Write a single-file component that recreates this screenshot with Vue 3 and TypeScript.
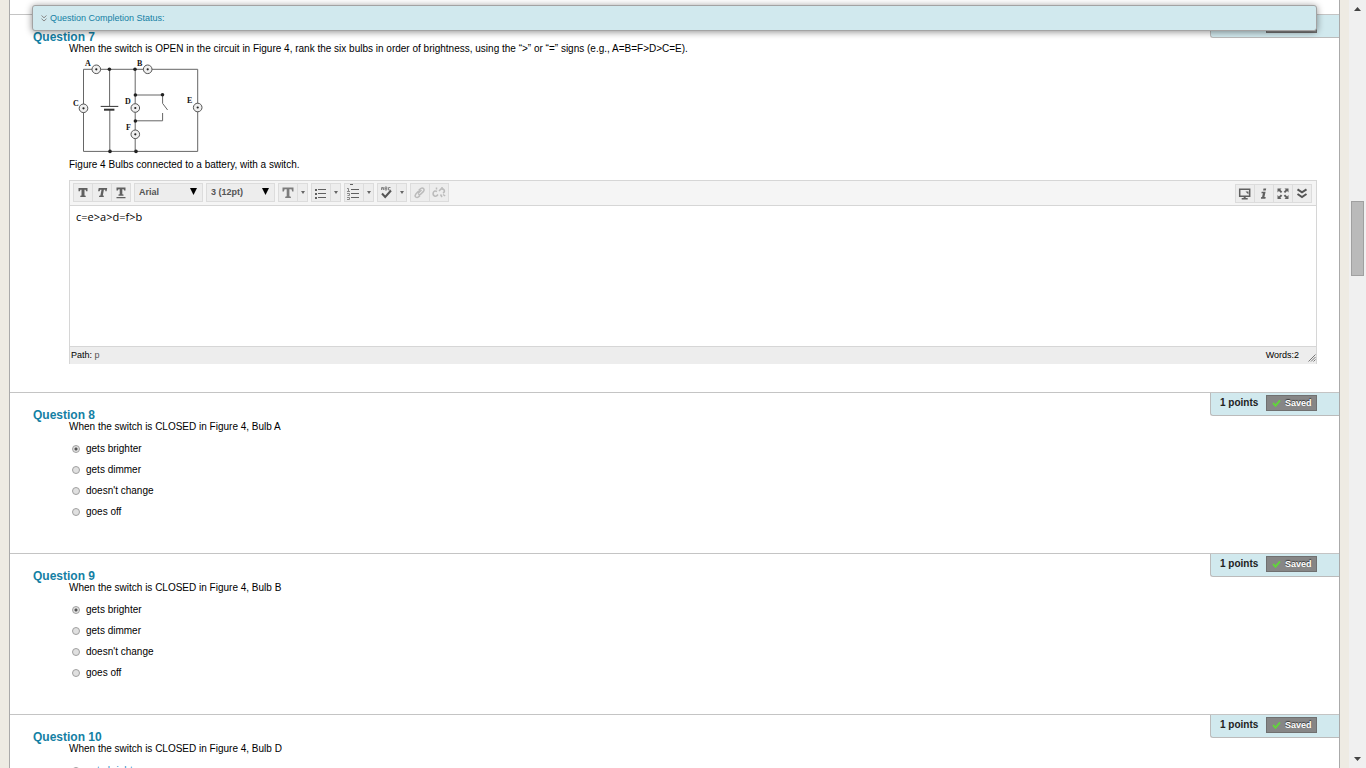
<script setup lang="ts">
import { ref } from 'vue'

interface Question {
  id: number
  text: string
  selected: string
}

const answer = ref('c=e>a>d=f>b')
const choices: string[] = ['gets brighter', 'gets dimmer', "doesn't change", 'goes off']
const questions = ref<Question[]>([
  { id: 8, text: 'When the switch is CLOSED in Figure 4, Bulb A', selected: 'gets brighter' },
  { id: 9, text: 'When the switch is CLOSED in Figure 4, Bulb B', selected: 'gets brighter' },
  { id: 10, text: 'When the switch is CLOSED in Figure 4, Bulb D', selected: '' },
])

const bulbs: { x: number; y: number }[] = [
  { x: 27.3, y: 12.3 },
  { x: 78.7, y: 12.3 },
  { x: 14.5, y: 51.3 },
  { x: 66.3, y: 51 },
  { x: 66.3, y: 77.3 },
  { x: 128.7, y: 50.5 },
]
const junctions: { x: number; y: number }[] = [
  { x: 40.4, y: 12.2 },
  { x: 66, y: 12.2 },
  { x: 66.4, y: 38 },
  { x: 93.5, y: 37.8 },
  { x: 66.4, y: 64 },
  { x: 41, y: 94.4 },
  { x: 67, y: 94.4 },
]
const labels: { t: string; x: number; y: number }[] = [
  { t: 'A', x: 16, y: 9 },
  { t: 'B', x: 68, y: 9 },
  { t: 'C', x: 4, y: 49 },
  { t: 'D', x: 56, y: 47 },
  { t: 'E', x: 118, y: 46 },
  { t: 'F', x: 57, y: 73 },
]
</script>

<template>
  <div class="window">
    <main class="page">
      <div class="status">
        <svg class="status-icon" viewBox="0 0 6 7" aria-hidden="true">
          <path d="M0.5 0.5 L3 2.8 L5.5 0.5 M0.5 3.7 L3 6 L5.5 3.7" />
        </svg>
        <a href="#">Question Completion Status:</a>
      </div>

      <section class="question essay">
        <header>
          <h3>Question 7</h3>
          <div class="points">
            <span>1 points</span>
            <button type="button" class="saved">Saved</button>
          </div>
        </header>
        <div class="body">
          <p>When the switch is OPEN in the circuit in Figure 4, rank the six bulbs in order of brightness, using the “&gt;” or “=” signs (e.g., A=B=F&gt;D&gt;C=E).</p>
          <svg class="circuit" viewBox="0 0 136 100" role="img" aria-label="Circuit diagram">
            <path class="wire" d="M14.5 12.3 H128.7 V94.4 H14.5 Z M40.6 12.3 V49 M40.8 53 V94.4 M66.2 12.3 V94.4 M66.4 38 H93.6 V46.4 L98.6 53 M93.6 56 V63.8 H66.4" />
            <path class="plate" d="M31.7 49.4 H49.3" />
            <path class="plate thick" d="M35 52.7 H45.4" />
            <g v-for="(b, i) in bulbs" :key="i">
              <circle class="bulb" :cx="b.x" :cy="b.y" r="4.3" />
              <circle class="core" :cx="b.x" :cy="b.y" r="1.1" />
            </g>
            <circle v-for="(j, i) in junctions" :key="'j' + i" class="dot" :cx="j.x" :cy="j.y" r="1.8" />
            <text v-for="l in labels" :key="l.t" :x="l.x" :y="l.y">{{ l.t }}</text>
          </svg>
          <p>Figure 4 Bulbs connected to a battery, with a switch.</p>

          <div class="editor">
            <div class="toolbar">
              <div class="group">
                <button type="button" aria-label="Bold">
                  <svg viewBox="0 0 18 17"><path class="f" d="M4.500 4h9v3.200h-1.400l-.5-1.400h-1.100v5.700l1.200.3V13H6.300v-1.200l1.200-.3V5.800H6.400l-.5 1.400H4.500z" /></svg>
                </button>
                <button type="button" aria-label="Italic">
                  <svg viewBox="0 0 18 17"><path class="f" d="M5.700 4h8.500l-.6 3.200h-1.200l-.2-1.500h-1.300l-1.100 5.800 1.100.3-.2 1.200H6l.2-1.200 1.200-.3 1.100-5.800H7.300l-.8 1.500H5.100z" /></svg>
                </button>
                <button type="button" aria-label="Underline">
                  <svg viewBox="0 0 18 17"><path class="f" d="M4.500 3.500h9v3h-1.400l-.5-1.300h-1.300v5l1.200.3v1.200h-5v-1.200l1.200-.3v-5H6.400l-.5 1.300H4.500zM4.500 13h9v1.200h-9z" /></svg>
                </button>
              </div>
              <label class="pick">
                <select aria-label="Font family"><option>Arial</option></select>
                <svg viewBox="0 0 7 7" aria-hidden="true"><path d="M0 0h7L3.500 7z" /></svg>
              </label>
              <label class="pick">
                <select aria-label="Font size"><option>3 (12pt)</option></select>
                <svg viewBox="0 0 7 7" aria-hidden="true"><path d="M0 0h7L3.500 7z" /></svg>
              </label>
              <div class="group">
                <button type="button" aria-label="Text color">
                  <svg viewBox="0 0 18 17"><path class="f soft" d="M3.500 3.500h11v4h-1.300l-.7-2.200h-2.100v7l1.500.4v1.400H6.200v-1.400l1.500-.4v-7H5.600L4.900 7.500H3.500z" /></svg>
                </button>
                <button type="button" class="drop" aria-label="More colors"><i></i></button>
              </div>
              <div class="group">
                <button type="button" aria-label="Bulleted list">
                  <svg viewBox="0 0 18 17"><path class="f" d="M3 5h2v2H3zM3 9h2v2H3zM3 13h2v2H3zM6 5h8v1H6zM6 9h8v1H6zM6 13h8v1H6z" /></svg>
                </button>
                <button type="button" class="drop" aria-label="More bullets"><i></i></button>
              </div>
              <div class="group">
                <button type="button" aria-label="Numbered list">
                  <svg viewBox="0 0 18 17"><path class="f" d="M5 0h3v1H5zM6 5h8v1H6zM6 9h8v1H6zM6 13h8v1H6z" /><path class="s" d="M2 4.500h1.500v3M2 7.500h3M2 9.500h2.500v2H2.500M2 13.500h2.500v2H2" /></svg>
                </button>
                <button type="button" class="drop" aria-label="More numbering"><i></i></button>
              </div>
              <div class="group">
                <button type="button" aria-label="Spell check">
                  <svg viewBox="0 0 18 17"><path class="s" d="M3.500 6V3.500h2V6M3.500 4.800h2M7 3v3h1.800V3H7M7 4.500h1.800M12.500 3.500h-2V6h2" /><path class="check" d="M4 9.500L7.200 13L13 6.500" /></svg>
                </button>
                <button type="button" class="drop" aria-label="More languages"><i></i></button>
              </div>
              <div class="group">
                <button type="button" aria-label="Insert link" disabled>
                  <svg viewBox="0 0 18 17"><path class="link" d="M7 9.500L10.500 6M7.800 6.200L9.700 4.500Q11.500 3.300 12.700 4.700Q13.700 6 12.500 7.400L9.700 10.200Q8.300 11.200 7.300 10.200M10 7.500Q8.700 6.600 7.100 7.600L4.700 10.200Q3.500 11.800 4.700 13Q6.100 14 7.500 12.900L9.100 11.500" /></svg>
                </button>
                <button type="button" aria-label="Remove link" disabled>
                  <svg viewBox="0 0 18 17"><path class="link" d="M7 7.500Q4.500 6 3.300 8.500Q2.500 11 4.500 12Q6.500 12.700 8 10.500M9 7L11 5Q13 4.500 14.200 6Q15 8 13 9M10.500 10.500L12 13M13 10.500L15.200 12M6.500 3.500V5.500M12 3V4" /></svg>
                </button>
              </div>
              <div class="group right">
                <button type="button" aria-label="Preview">
                  <svg viewBox="0 0 18 17"><path class="frame" d="M3.700 4.200h10v7H3.700z" /><path class="f" d="M7.700 11.500h2v2h-2zM5.700 13h6v1.500h-6zM9.500 6.500h3v3z" /></svg>
                </button>
                <button type="button" aria-label="Help">
                  <svg viewBox="0 0 18 17"><path class="f" d="M8.500 3.500h2.700l-.4 2H8.100zM6.700 6.700h3.900l-1.200 5.300h1.300l-.3 1.700H5.900l.3-1.700h.9l.8-3.700H6.400z" /></svg>
                </button>
                <button type="button" aria-label="Full screen">
                  <svg viewBox="0 0 18 17"><path class="f" d="M3.500 3.500h4L6.300 4.700l2 2-1.400 1.400-2-2L3.500 7.500zM14.500 3.500v4l-1.400-1.400-2 2-1.400-1.400 2-2-1.200-1.200zM3.500 14v-4l1.400 1.400 2-2 1.400 1.400-2 2L7.500 14zM14.500 14h-4l1.200-1.200-2-2 1.400-1.400 2 2 1.400-1.400z" /></svg>
                </button>
                <button type="button" aria-label="More tools">
                  <svg viewBox="0 0 18 17"><path class="chev" d="M4.500 4.300L9 7.300L13.500 4.300M4.500 9L9 12L13.500 9" /></svg>
                </button>
              </div>
            </div>
            <textarea v-model="answer" aria-label="Answer" spellcheck="false"></textarea>
            <div class="pathbar">
              <span>Path: <a href="#">p</a></span>
              <span class="words">Words:2</span>
              <svg viewBox="0 0 8 8" aria-hidden="true"><path d="M0.500 7.500L7.500 0.500M3 7.500L7.500 3M5.500 7.500L7.500 5.500" /></svg>
            </div>
          </div>
        </div>
      </section>

      <section v-for="q in questions" :key="q.id" class="question">
        <header>
          <h3>Question {{ q.id }}</h3>
          <div class="points">
            <span>1 points</span>
            <button type="button" class="saved">
              <svg viewBox="0 0 9 8" aria-hidden="true"><path d="M1 4L3.500 6.700L8 1.300" /></svg>
              Saved
            </button>
          </div>
        </header>
        <div class="body">
          <p>{{ q.text }}</p>
          <ul>
            <li v-for="c in choices" :key="c">
              <label :class="{ active: !q.selected }">
                <input v-model="q.selected" type="radio" :name="'q' + q.id" :value="c" />
                {{ c }}
              </label>
            </li>
          </ul>
        </div>
      </section>
    </main>

    <div class="scrollbar" aria-hidden="true">
      <svg viewBox="0 0 7 4"><path d="M0 4L3.500 0L7 4z" /></svg>
      <div class="track"><div class="thumb"></div></div>
      <svg viewBox="0 0 7 4"><path d="M0 0L3.500 4L7 0z" /></svg>
    </div>
  </div>
</template>

<style>
html,
body {
  overflow: hidden;
}
</style>

<style scoped>
.window {
  display: flex;
  height: 100vh;
  overflow: hidden;
  background: #eeebe3;
  font-family: "Liberation Sans", Arial, sans-serif;
  font-size: 10px;
  line-height: 12px;
  color: #000;
}
.page {
  position: relative;
  flex: 1;
  min-width: 0;
  margin: 0 9px;
  padding-top: 14px;
  box-sizing: border-box;
  overflow: hidden;
  background: #fff;
  border: solid #aaa;
  border-width: 0 1px;
}
.status {
  position: absolute;
  z-index: 2;
  top: 5px;
  left: 22px;
  right: 22px;
  height: 26px;
  box-sizing: border-box;
  display: flex;
  align-items: center;
  gap: 3px;
  padding-left: 8px;
  background: #d1e9ee;
  border: 1px solid #a3a3a3;
  border-radius: 3px;
  box-shadow: 0 1px 7px rgba(0, 0, 0, 0.45);
  font-size: 9px;
}
.status a {
  color: #1480a4;
  text-decoration: none;
}
.status-icon {
  width: 6px;
  height: 7px;
  fill: none;
  stroke: #888;
}
.question {
  border-top: 1px solid #c4c4c4;
  padding-bottom: 31px;
}
.essay {
  padding-bottom: 28px;
}
header {
  display: flex;
  justify-content: space-between;
  height: 28px;
}
h3 {
  margin: 15px 0 0 23px;
  font-size: 12px;
  line-height: 14px;
  color: #1480a4;
}
.points {
  display: flex;
  align-items: flex-start;
  justify-content: space-between;
  width: 129px;
  height: 23px;
  box-sizing: border-box;
  padding: 2px 22px 0 9px;
  background: #d1e9ee;
  border: solid #bbb;
  border-width: 0 0 1px 1px;
  border-bottom-left-radius: 3px;
  font-weight: bold;
  line-height: 16px;
  color: #222;
}
.saved {
  display: flex;
  align-items: center;
  gap: 4px;
  width: 51px;
  height: 16px;
  margin: 0;
  padding: 0 0 0 5px;
  background: #868686;
  border: 1px solid #707070;
  font: bold 9px/14px "Liberation Sans", Arial, sans-serif;
  color: #fff;
  text-shadow: 0 -1px 1px #333;
}
.saved svg {
  width: 9px;
  height: 8px;
  fill: none;
  stroke: #62d33c;
  stroke-width: 2;
}
.body {
  margin: 0 22px 0 59px;
}
p {
  margin: 0;
}
ul {
  margin: 5px 0 0;
  padding: 0;
  list-style: none;
}
li label {
  display: flex;
  align-items: center;
  gap: 6px;
  height: 21px;
  padding-left: 3px;
}
li label.active {
  color: #2a90c8;
}
input[type="radio"] {
  appearance: none;
  width: 8px;
  height: 8px;
  box-sizing: border-box;
  margin: 0;
  border: 1px solid #a0a0a0;
  border-radius: 50%;
  background: #e0e0e0;
}
input[type="radio"]:checked {
  background: radial-gradient(circle, #555 0 1px, #e0e0e0 2px);
}
.circuit {
  display: block;
  width: 136px;
  height: 100px;
  margin: 2px 0;
}
.wire {
  fill: none;
  stroke: #666;
}
.plate {
  stroke: #333;
}
.thick {
  stroke-width: 2;
}
.bulb {
  fill: #f0f0f0;
  stroke: #555;
}
.core,
.dot {
  fill: #222;
}
.circuit text {
  font: bold 8px "Liberation Serif", "Times New Roman", serif;
  fill: #111;
}
.editor {
  margin-top: 9px;
  border: 1px solid #d6d6d6;
  border-bottom: 0;
}
.toolbar {
  display: flex;
  align-items: flex-start;
  gap: 3px;
  height: 22px;
  padding: 2px 4px 0 3px;
  background: #f5f5f5;
  border-bottom: 1px solid #d6d6d6;
}
.group {
  display: flex;
  border: 1px solid #dcdcdc;
}
.group button {
  width: 18px;
  height: 17px;
  box-sizing: content-box;
  margin: 0;
  padding: 0;
  border: 0;
  background: #ededed;
}
.group button + button {
  border-left: 1px solid #dcdcdc;
}
.group .drop {
  width: 9px;
}
.group svg {
  display: block;
  width: 18px;
  height: 17px;
  fill: none;
}
.f {
  fill: #606060;
}
.soft {
  fill: #7c7c7c;
}
.s {
  stroke: #888;
}
.check {
  stroke: #555;
  stroke-width: 2;
}
.link {
  stroke: #bbb;
  stroke-width: 1.5;
}
.frame {
  stroke: #606060;
  stroke-width: 1.5;
}
.chev {
  stroke: #555;
  stroke-width: 2;
}
.drop i {
  display: block;
  width: 0;
  margin: 0 auto;
  border: solid transparent;
  border-width: 3px 2px 0;
  border-top-color: #666;
}
.right {
  margin: 1px 0 0 auto;
}
.pick {
  display: grid;
  align-items: center;
  width: 69px;
}
.pick select,
.pick svg {
  grid-area: 1 / 1;
}
.pick select {
  appearance: none;
  width: 100%;
  height: 19px;
  box-sizing: border-box;
  margin: 0;
  padding: 0 4px 2px;
  border: 1px solid #dcdcdc;
  border-radius: 0;
  background: #ededed;
  font: bold 9px "Liberation Sans", Arial, sans-serif;
  color: #555;
}
.pick svg {
  justify-self: end;
  width: 7px;
  height: 7px;
  margin: 0 6px 2px 0;
  pointer-events: none;
}
textarea {
  display: block;
  width: 100%;
  height: 140px;
  box-sizing: border-box;
  padding: 3px 6px;
  border: 0;
  outline: 0;
  resize: none;
  background: #fff;
  font: 11px/15px "Open Sans", sans-serif;
  color: #000;
}
.pathbar {
  display: flex;
  align-items: flex-start;
  height: 17px;
  padding-left: 1px;
  background: #ededed;
  border-top: 1px solid #d6d6d6;
  font-size: 9px;
  line-height: 16px;
}
.pathbar a {
  color: #555;
  text-decoration: none;
}
.words {
  margin: 0 9px 0 auto;
}
.pathbar svg {
  width: 8px;
  height: 8px;
  align-self: flex-end;
  margin-bottom: 2px;
  fill: none;
  stroke: #777;
}
.scrollbar {
  display: flex;
  flex-direction: column;
  align-items: center;
  width: 17px;
  box-sizing: border-box;
  padding: 7px 0;
  background: #f0f0f0;
}
.scrollbar svg {
  width: 7px;
  height: 4px;
  fill: #444;
}
.track {
  flex: 1;
  width: 13px;
}
.thumb {
  height: 75px;
  box-sizing: border-box;
  margin-top: 190px;
  background: #bababa;
  border: 1px solid #a0a0a0;
}
</style>
